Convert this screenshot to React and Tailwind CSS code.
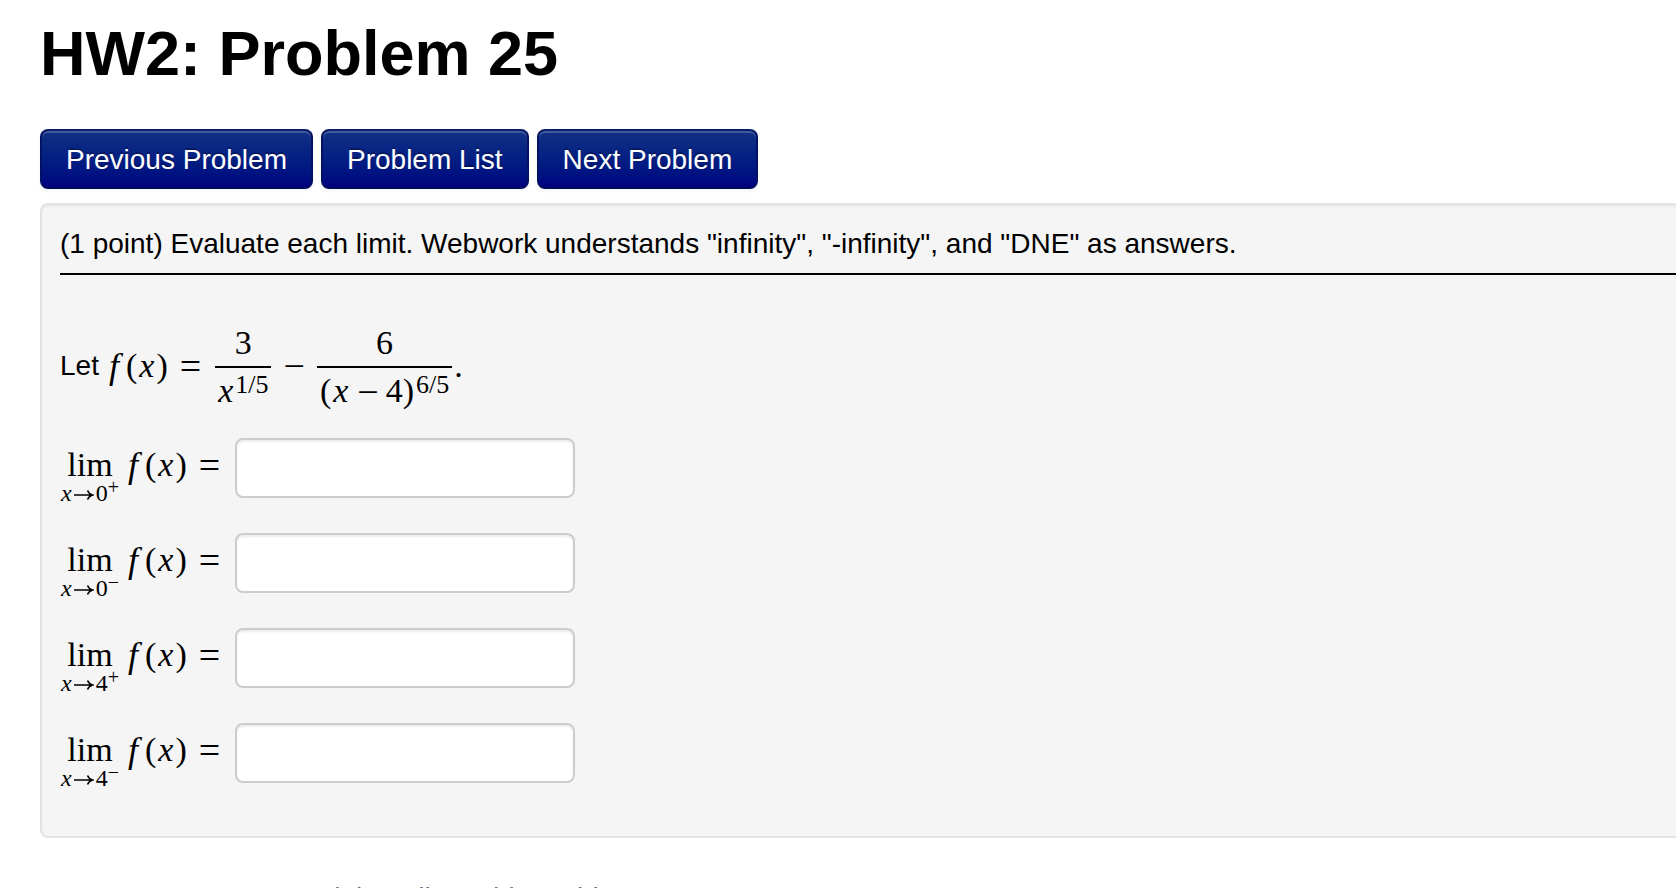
const limits = [
  { id: "limit-1", point: "0", side: "+" },
  { id: "limit-2", point: "0", side: "−" },
  { id: "limit-3", point: "4", side: "+" },
  { id: "limit-4", point: "4", side: "−" },
];

function NavButton({ children }) {
  return (
    <button
      type="button"
      className="h-[60px] cursor-pointer rounded-lg border-2 border-t-[#0b1f66] border-x-[#041266] border-b-[#000a5c] bg-linear-to-b from-[#133084] to-[#000080] px-6 pt-0.5 text-[28px] leading-10 text-white shadow-[inset_0_2px_0_rgba(255,255,255,0.2),0_2px_4px_rgba(0,0,0,0.05)] [text-shadow:0_-2px_0_rgba(0,0,0,0.25)]"
    >
      {children}
    </button>
  );
}

function FunctionOfX() {
  return (
    <span className="flex">
      <i className="mr-[7px] text-[36px] leading-10">f</i>
      <span>(</span>
      <i className="mx-0.5">x</i>
      <span>)</span>
    </span>
  );
}

function Operator({ children }) {
  return <span className="text-[38px] leading-10">{children}</span>;
}

function Fraction({ top, children }) {
  return (
    <span className="flex flex-col items-center">
      <span className="leading-[38px]">{top}</span>
      <span className="mt-1 flex border-t-2 border-black px-[3px] pt-1 leading-[38px]">
        {children}
      </span>
    </span>
  );
}

function Exponent({ children }) {
  return <span className="-mt-1.5 ml-0.5 text-[26px]">{children}</span>;
}

function LimitRow({ id, point, side }) {
  return (
    <div className="flex h-[95px] items-start">
      <label
        htmlFor={id}
        className="flex w-[175px] items-start pt-2 font-['Liberation_Serif',serif] text-[34px] leading-10"
      >
        <span className="flex w-[60px] flex-col items-center">
          <span>lim</span>
          <span className="flex items-center text-2xl leading-4">
            <i>x</i>
            <svg
              viewBox="0 0 20 12"
              className="mx-0.5 mt-1 h-3 w-5"
              fill="none"
              stroke="currentColor"
              strokeWidth="1.6"
              aria-hidden="true"
            >
              <path d="M0 6H18M13.5 1.5Q15 5 18.5 6Q15 7 13.5 10.5" />
            </svg>
            <span>{point}</span>
            <span className="-mt-3 text-xl leading-4">{side}</span>
          </span>
        </span>
        <span className="ml-2">
          <FunctionOfX />
        </span>
        <span className="ml-3">
          <Operator>=</Operator>
        </span>
      </label>
      <input
        id={id}
        type="text"
        className="mt-px h-[60px] w-[340px] rounded-lg border-2 border-[#cccccc] bg-white px-3 text-[28px] shadow-[inset_0_2px_2px_rgba(0,0,0,0.075)]"
      />
    </div>
  );
}

export default function App() {
  return (
    <main className="h-screen overflow-hidden bg-white pl-10 pt-[19px] font-['Liberation_Sans',Arial,sans-serif] text-[28px] leading-10 text-black">
      <h1 className="text-[63px] leading-[68px] font-bold">HW2: Problem 25</h1>
      <nav className="mt-[42px] flex gap-2">
        <NavButton>Previous Problem</NavButton>
        <NavButton>Problem List</NavButton>
        <NavButton>Next Problem</NavButton>
      </nav>
      <section className="mt-[14px] rounded-l-lg border-y-2 border-l-2 border-[#e3e3e3] bg-[#f5f5f5] pb-[19px] pl-[18px] pt-[19px] shadow-[inset_0_2px_2px_rgba(0,0,0,0.05)]">
        <p className="leading-10">
          (1 point) Evaluate each limit. Webwork understands "infinity",
          "-infinity", and "DNE" as answers.
        </p>
        <hr className="mt-[9px] border-t-2 border-black" />
        <div className="mt-[49px] flex h-[113px] items-start">
          <span className="pt-[22px]">Let</span>
          <div className="ml-[10px] flex items-start font-['Liberation_Serif',serif] text-[34px] leading-10">
            <span className="pt-[22px]">
              <FunctionOfX />
            </span>
            <span className="ml-3 pt-[22px]">
              <Operator>=</Operator>
            </span>
            <span className="ml-[14px]">
              <Fraction top="3">
                <i>x</i>
                <Exponent>1/5</Exponent>
              </Fraction>
            </span>
            <span className="mx-3 pt-[22px]">
              <Operator>−</Operator>
            </span>
            <Fraction top="6">
              <span>(</span>
              <i className="mx-0.5">x</i>
              <span className="mx-[7px]">
                <Operator>−</Operator>
              </span>
              <span>4)</span>
              <Exponent>6/5</Exponent>
            </Fraction>
            <span className="ml-0.5 pt-[22px]">.</span>
          </div>
        </div>
        <div>
          {limits.map((limit) => (
            <LimitRow key={limit.id} {...limit} />
          ))}
        </div>
      </section>
      <p className="mt-10 whitespace-nowrap text-gray-500">
        Note: You can earn partial credit on this problem.
      </p>
    </main>
  );
}
